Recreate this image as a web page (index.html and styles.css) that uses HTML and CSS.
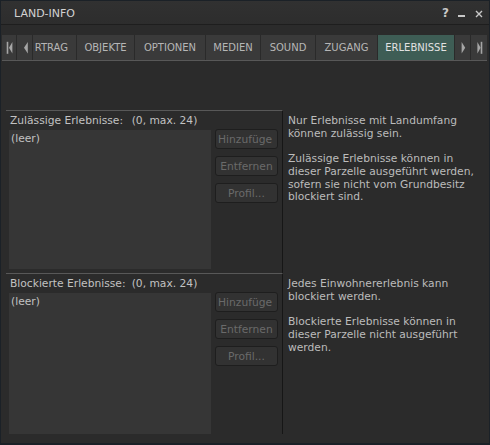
FILE: index.html
```html
<!DOCTYPE html>
<html lang="de">
<head>
<meta charset="utf-8">
<title>LAND-INFO</title>
<link rel="stylesheet" href="styles.css">
</head>
<body>
<div class="window">
  <div class="titlebar">
    <span class="title">LAND-INFO</span>
    <div class="controls">
      <span class="help">?</span>
      <span class="minimize"></span>
      <svg class="close" width="8" height="8" viewBox="0 0 8 8"><path d="M1 1 L7 7 M7 1 L1 7" stroke="#c8c8c8" stroke-width="1.4" fill="none"/></svg>
    </div>
  </div>

  <div class="tabbar">
    <div class="tab arrow a-first"><svg width="15" height="25" viewBox="0 0 15 25"><rect x="4.7" y="6.8" width="1.6" height="12" fill="#a6a6a6"/><polygon points="10.4,7 7,12.8 10.4,18.6" fill="#a6a6a6"/></svg></div>
    <div class="tab arrow a-prev"><svg width="16" height="25" viewBox="0 0 16 25"><polygon points="10.8,7 7,12.8 10.8,18.6" fill="#a6a6a6"/></svg></div>
    <div class="tab t-rtrag">RTRAG</div>
    <div class="tab t-objekte">OBJEKTE</div>
    <div class="tab t-optionen">OPTIONEN</div>
    <div class="tab t-medien">MEDIEN</div>
    <div class="tab t-sound">SOUND</div>
    <div class="tab t-zugang">ZUGANG</div>
    <div class="tab t-erlebnisse selected">ERLEBNISSE</div>
    <div class="tab arrow a-next"><svg width="16" height="25" viewBox="0 0 16 25"><polygon points="6.6,7 10.2,12.8 6.6,18.6" fill="#a6a6a6"/></svg></div>
    <div class="tab arrow a-last"><svg width="16" height="25" viewBox="0 0 16 25"><polygon points="6.4,7 9.6,12.8 6.4,18.6" fill="#a6a6a6"/><rect x="9.7" y="6.8" width="1.6" height="12" fill="#a6a6a6"/></svg></div>
  </div>

  <div class="content">
    <div class="section s-allowed">
      <div class="panel">
        <div class="label"><span class="name">Zulässige Erlebnisse:</span><span class="count">(0, max. 24)</span></div>
        <div class="body">
          <div class="list">(leer)</div>
          <div class="buttons">
            <button class="btn btn-add">Hinzufüge</button>
            <button class="btn">Entfernen</button>
            <button class="btn">Profil...</button>
          </div>
        </div>
      </div>
      <div class="desc">
        <p>Nur Erlebnisse mit Landumfang<br>können zulässig sein.</p>
        <p>Zulässige Erlebnisse können in<br>dieser Parzelle ausgeführt werden,<br>sofern sie nicht vom Grundbesitz<br>blockiert sind.</p>
      </div>
    </div>

    <div class="section s-blocked">
      <div class="panel">
        <div class="label"><span class="name">Blockierte Erlebnisse:</span><span class="count">(0, max. 24)</span></div>
        <div class="body">
          <div class="list">(leer)</div>
          <div class="buttons">
            <button class="btn btn-add">Hinzufüge</button>
            <button class="btn">Entfernen</button>
            <button class="btn">Profil...</button>
          </div>
        </div>
      </div>
      <div class="desc">
        <p>Jedes Einwohnererlebnis kann<br>blockiert werden.</p>
        <p>Blockierte Erlebnisse können in<br>dieser Parzelle nicht ausgeführt<br>werden.</p>
      </div>
    </div>
  </div>
</div>
</body>
</html>
```

FILE: styles.css
```css
html, body {
  margin: 0;
  padding: 0;
  background: #1b2127;
}

.window {
  box-sizing: border-box;
  width: 490px;
  height: 445px;
  background: #2b2b2b;
  border: 1px solid #1b2127;
  border-bottom-width: 2px;
  font-family: "DejaVu Sans", "Liberation Sans", sans-serif;
  color: #c2c2c2;
  overflow: hidden;
}

/* Title bar */
.titlebar {
  display: flex;
  align-items: flex-start;
  height: 23px;
  background: linear-gradient(#313131, #2d2d2d);
  border-bottom: 1px solid #1e1e1e;
}

.title {
  padding: 2px 0 0 13px;
  font-size: 11px;
  line-height: 21px;
  color: #d2d2d2;
}

.controls {
  margin-left: auto;
  display: flex;
  align-items: flex-start;
  height: 23px;
}

.help {
  font-size: 12px;
  font-weight: bold;
  line-height: 21px;
  padding-top: 2px;
  color: #c8c8c8;
  width: 8px;
  margin-right: 8px;
}

.minimize {
  width: 7px;
  height: 2px;
  margin-top: 14px;
  background: #c8c8c8;
  margin-right: 10px;
}

.close {
  margin-top: 9px;
  margin-right: 6px;
}

/* Tab bar */
.tabbar {
  display: flex;
  height: 25px;
  margin: 10px 2px 0 1px;
  border-bottom: 1px solid #585858;
}

.tab {
  box-sizing: border-box;
  flex: none;
  height: 25px;
  background: #3a3a3a;
  border-right: 1px solid #2a2a2a;
  font-size: 10px;
  line-height: 25px;
  color: #b6b6b6;
  text-align: center;
  white-space: nowrap;
  overflow: hidden;
}

.tab svg { display: block; }

.a-first { width: 15px; }
.a-prev { width: 16px; }
.a-next { width: 16px; }
.a-last { width: 16px; border-right: none; }

.t-rtrag { width: 44px; text-align: right; padding-right: 8px; }
.t-objekte { width: 58px; }
.t-optionen { width: 71px; }
.t-medien { width: 55px; }
.t-sound { width: 55px; }
.t-zugang { width: 62px; }
.t-erlebnisse { width: 77px; }

.tab.selected {
  background: #3e5d55;
  color: #e2e2e2;
}

/* Content */
.content {
  padding: 49px 0 9px 5px;
  font-size: 10.7px;
  line-height: 13px;
}

.section {
  display: flex;
}

.panel {
  box-sizing: border-box;
  width: 277px;
  border-top: 1px solid #585858;
  border-right: 1px solid #161616;
  padding: 3px 4px 4px 3px;
}

.s-blocked .panel {
  padding-bottom: 0;
}

.label {
  display: flex;
  padding-left: 1px;
  height: 13px;
  color: #c2c2c2;
  white-space: nowrap;
}

.label .name {
  width: 121.7px;
  flex: none;
}

.body {
  display: flex;
  gap: 4px;
  margin-top: 3px;
}

.list {
  box-sizing: border-box;
  width: 202px;
  height: 139px;
  background: #363636;
  padding: 2px 0 0 2px;
  color: #c2c2c2;
}

.s-blocked .list {
  height: 141px;
}

.buttons {
  display: flex;
  flex-direction: column;
  gap: 7px;
  margin-top: -1px;
}

.btn {
  box-sizing: border-box;
  width: 63px;
  height: 20px;
  margin: 0;
  padding: 0 2px;
  background: #323232;
  border: 1px solid #1e1e1e;
  border-radius: 3px;
  font-family: "DejaVu Sans", "Liberation Sans", sans-serif;
  font-size: 10.7px;
  line-height: 17px;
  color: #6a6a6a;
  text-align: center;
  white-space: nowrap;
  overflow: hidden;
}

.btn-add {
  text-align: left;
}

.desc {
  padding: 5px 0 0 5px;
  line-height: 12.7px;
  color: #bcbcbc;
  white-space: nowrap;
}

.desc p {
  margin: 0;
}

.desc p + p {
  margin-top: 12.7px;
}
```
